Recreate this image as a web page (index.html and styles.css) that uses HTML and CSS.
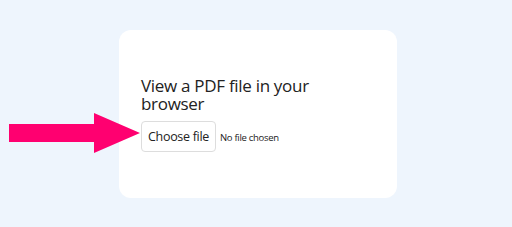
FILE: index.html
```html
<!DOCTYPE html>
<html lang="en">
<head>
    <meta charset="UTF-8">
    <meta name="viewport" content="width=device-width, initial-scale=1.0">
    <title>PDF Viewer</title>
    <link rel="stylesheet" href="styles.css">
</head>
<body>
    <div class="page">
        <svg class="arrow" width="140" height="44" viewBox="0 0 140 44">
            <polygon points="9,11 94,11 94,0 140,20 94,40 94,29 9,29" fill="#ff0070"/>
        </svg>
        <div class="card">
            <h1 class="title">View a PDF file in your browser</h1>
            <div class="picker">
                <label for="pdf-file" class="button">Choose file</label>
                <span class="filename">No file chosen</span>
                <input type="file" id="pdf-file" class="file" accept="application/pdf">
            </div>
        </div>
    </div>
</body>
</html>
```

FILE: styles.css
```css
body {
    background-color: #eef5fd;
    color: #222222;
    font-family: "Open Sans", "Noto Sans", sans-serif;
    margin: 0;
    padding: 0;
}
.page {
    position: relative;
    height: 227px;
    display: flex;
    align-items: center;
    justify-content: center;
    padding-left: 4px;
    box-sizing: border-box;
}
.arrow {
    position: absolute;
    left: 0;
    top: 113px;
}
.card {
    width: 278px;
    height: 168px;
    box-sizing: border-box;
    background-color: #ffffff;
    border-radius: 12px;
    padding: 2px 22px 0 22px;
    display: flex;
    flex-direction: column;
    justify-content: center;
}
.title {
    font-size: 17px;
    font-weight: normal;
    line-height: 18px;
    letter-spacing: -0.3px;
    margin: 0 0 8px 0;
    width: 190px;
}
.picker {
    display: flex;
    align-items: center;
}
.button {
    display: flex;
    align-items: center;
    justify-content: center;
    box-sizing: border-box;
    width: 75px;
    height: 31px;
    font-size: 12.5px;
    letter-spacing: -0.3px;
    background-color: #ffffff;
    border: 1px solid #dddddd;
    border-radius: 4px;
    cursor: pointer;
}
.filename {
    font-size: 9.5px;
    letter-spacing: -0.3px;
    margin-left: 4px;
    margin-top: 2px;
}
.file {
    display: none;
}
```
